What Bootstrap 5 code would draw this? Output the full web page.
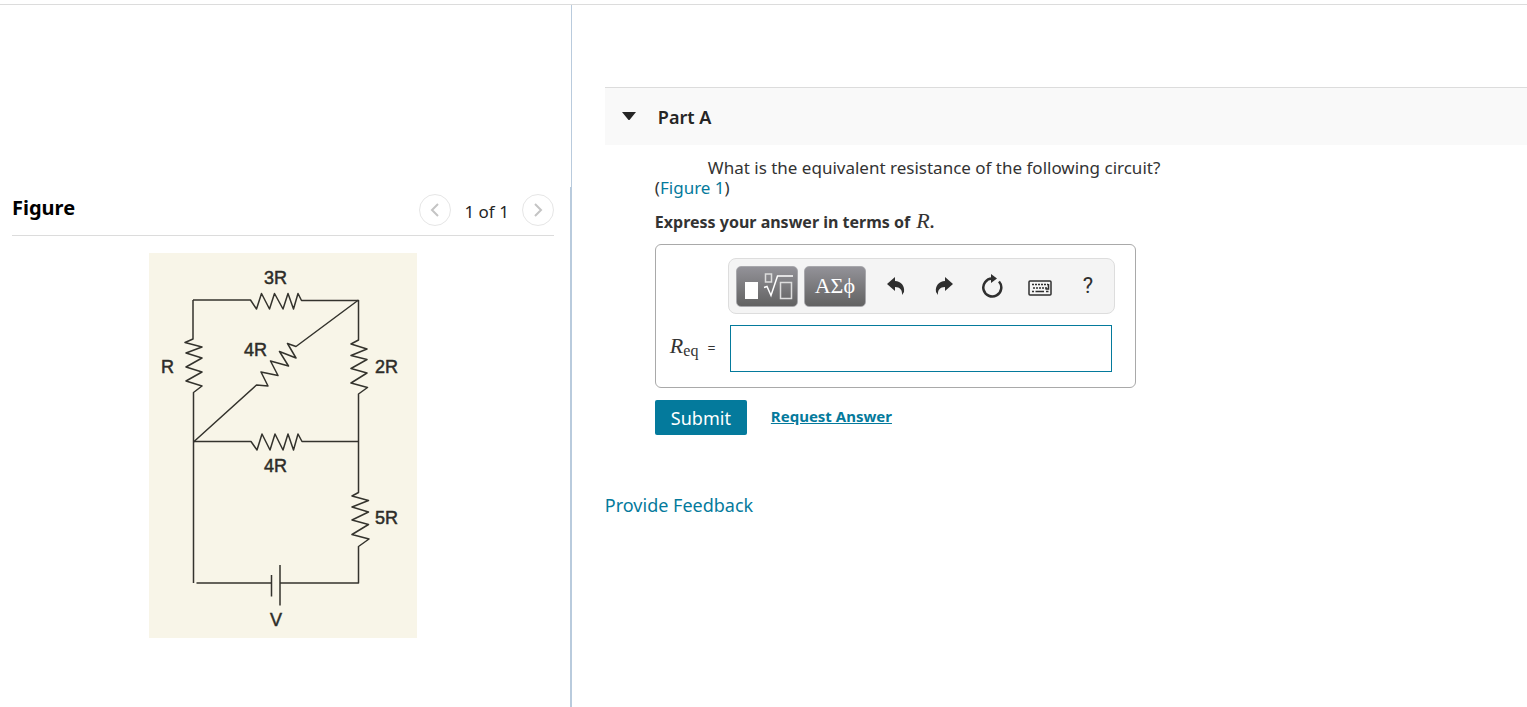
<!DOCTYPE html>
<html lang="en">
<head>
<meta charset="utf-8">
<meta name="viewport" content="width=device-width, initial-scale=1">
<title>Part A – Equivalent resistance</title>
<link rel="stylesheet" href="https://cdn.jsdelivr.net/npm/bootstrap@5.3.0/dist/css/bootstrap.min.css">
<style>
:root { --teal: #047a9c; --ink: #252525; --rule: #dcdcdc; --divider: #b9cbdd; }
body { font-family: "Noto Sans", "Open Sans", sans-serif; font-size: 17px; line-height: 20px; color: #333; background: #fff; }
a { color: var(--teal); }
.page { padding-top: 4px; }
.split { border-top: 1px solid var(--rule); }
.side { width: 37.45%; }
.side-top { height: 182px; border-right: 1px solid var(--divider); }
.figure-panel { border-right: 2px solid var(--divider); padding: 7px 16px 16px 12px; }
.figure-bar { border-bottom: 1px solid var(--rule); height: 42px; padding-bottom: 10px; }
.figure-title { font-size: 20px; line-height: 24px; font-weight: 700; color: #000; padding-bottom: 4px; }
.pager { width: 32px; height: 32px; padding: 0; border: 1px solid #e6e6e6; border-radius: 50%; background: #fff; }
.page-count { color: var(--ink); padding: 4px 13px 0; }
.circuit { width: 268px; height: 385px; background: #f8f5e8; margin-top: 17px; }
.main-col { padding: 82px 0 0 33px; }
.part-head { height: 58px; background: #f9f9f9; border-top: 1px solid var(--rule); padding: 0 17px; gap: 22px; }
.part-title { font-size: 18px; line-height: 24px; font-weight: 600; color: var(--ink); }
.part-body { padding: 13px 16px 0 50px; }
.lead-gap { text-indent: 53px; }
.var-r { font-family: "Liberation Serif", serif; font-style: italic; font-weight: 400; font-size: 22px; line-height: 20px; }
.prompt { font-size: 16px; font-weight: 700; margin-top: 13px; }
.prompt .var-r { margin-left: 2px; }
.answer { max-width: 481px; border: 1px solid #a9a9a9; border-radius: 6px; margin-top: 12px; padding: 13px 20px 15px 14px; }
.tools { background: #f4f4f4; border: 1px solid #ddd; border-radius: 8px; height: 56px; padding-left: 7px; margin-left: 58px; }
.tool-dark { height: 41px; width: 62px; padding: 0; border: 1px solid #a8a8ac; border-radius: 5px; color: #fff; background: linear-gradient(#939298, #626262); font: 22px/36px "Liberation Serif", serif; }
.tool-dark + .tool-dark { margin-left: 6px; }
.tool { width: 48px; height: 40px; padding: 0; border: 0; background: none; color: #2f2f2f; font: 22px/40px Roboto, sans-serif; }
.tool-first { margin-left: 6px; }
.answer-row { margin-top: 11px; padding-right: 3px; }
.answer-label { width: 60px; padding-bottom: 3px; }
.answer-label sub { font-family: "Liberation Serif", serif; font-size: 16px; bottom: -3px; }
.equals { font-size: 14px; margin-left: 9px; }
.answer-input { height: 47px; border: 1px solid var(--teal); border-radius: 0; padding: 4px 8px; min-width: 0; }
.submit { background: var(--teal); color: #fff; border: 0; border-radius: 2px; width: 92px; height: 35px; padding: 0; font-size: 18px; line-height: 34px; }
.request { font-size: 15px; font-weight: 700; padding-bottom: 4px; }
.feedback { font-size: 18px; line-height: 24px; margin-top: 58px; }
@media (min-width: 768px) { .split { min-height: calc(100vh - 4px); } }
</style>
<script src="https://cdn.jsdelivr.net/npm/bootstrap@5.3.0/dist/js/bootstrap.bundle.min.js"></script>
</head>
<body>
<div class="page">
<div class="split d-flex">
  <aside class="side d-flex flex-column flex-shrink-0">
    <div class="side-top"></div>
    <section class="figure-panel flex-grow-1">
      <div class="figure-bar d-flex align-items-center">
        <h2 class="figure-title m-0 me-auto">Figure</h2>
        <button class="pager d-flex align-items-center justify-content-center" type="button" aria-label="Previous figure">
          <svg width="14" height="16" viewBox="0 0 14 16" fill="none" stroke="#c4c4c4" stroke-width="2"><path d="M10 2 4 8l6 6"/></svg>
        </button>
        <span class="page-count text-nowrap">1 of 1</span>
        <button class="pager d-flex align-items-center justify-content-center" type="button" aria-label="Next figure">
          <svg width="14" height="16" viewBox="0 0 14 16" fill="none" stroke="#c4c4c4" stroke-width="2"><path d="m4 2 6 6-6 6"/></svg>
        </button>
      </div>
      <svg class="circuit d-block mx-auto" viewBox="0 0 268 385" role="img" aria-label="Resistor circuit">
        <g fill="none" stroke="#34332d" stroke-width="1.5" stroke-linejoin="round">
          <path d="M44 47H101.5L107.5 56 112.5 40.5 120.5 56 125.5 40.5 134 56 139 40.5 144.5 56 149 40.5 152.5 47.500H209.500"/>
          <path d="M44 47V86L36 89.500 53 94 37 100 53 105 37 114 53 119 37 128 53 133 44.500 139.500V330"/>
          <path d="M209.500 47V87L202 91 218 96 202 102.500 218 106.500 202 115.500 218 120 202 130 218.500 134.500 209.500 141V239.500L203 243 219.500 247.500 203 254 219.500 259 203 267 219.500 271.500 203 281.500 220 286 209.500 293.500V330H131"/>
          <path d="M44.500 188.500H102L108 197 113 181 121 197 126 181 134 197 139 181 144.500 197 149 181 153 188.500H209.500"/>
          <path d="M44.500 189 107.500 132 119 133 112 119 129 122.500 121.500 108 139.500 113 130.500 98.500 147 105 138.500 90.500 147 93.500 209.500 47"/>
          <path d="M47.500 330H122.500M122.500 322V343.500M131 312V352.500"/>
        </g>
        <g fill="#2e2d29" stroke="#2e2d29" stroke-width=".5" font-family="Liberation Sans, sans-serif" font-size="18">
          <text x="115" y="31">3R</text><text x="95" y="103">4R</text><text x="12" y="120">R</text><text x="226" y="120">2R</text>
          <text x="115" y="219">4R</text><text x="226" y="271">5R</text><text x="121" y="373">V</text>
        </g>
      </svg>
    </section>
  </aside>
  <main class="main-col flex-grow-1">
    <div class="part-head d-flex align-items-center">
      <svg width="14" height="10" viewBox="0 0 14 10" aria-hidden="true"><path d="M0 0H14L7.500 8h-1z" fill="#252525"/></svg>
      <h1 class="part-title m-0">Part A</h1>
    </div>
    <div class="part-body">
      <p class="lead-gap m-0">What is the equivalent resistance of the following circuit?</p>
      <p class="m-0">(<a class="text-decoration-none" href="#figure">Figure 1</a>)</p>
      <p class="prompt mb-0">Express your answer in terms of <span class="var-r">R</span>.</p>
      <form class="m-0">
        <div class="answer">
          <div class="tools d-flex align-items-center">
            <button class="tool-dark flex-shrink-0" type="button" aria-label="Math templates">
              <svg class="d-block" width="60" height="39" viewBox="0 0 60 39" fill="none"><path fill="#fff" d="M8 15h13v17H8z"/><path stroke="#ddd" stroke-width="1.500" d="M28.500 7h6v8h-6zM43.500 15.500h11v16h-11z"/><path stroke="#fff" stroke-width="1.500" d="M27 20.500l3-1 4 9 6.500-19.500H56"/></svg>
            </button>
            <button class="tool-dark flex-shrink-0" type="button" aria-label="Greek letters">ΑΣϕ</button>
            <button class="tool tool-first flex-shrink-0 d-flex align-items-center justify-content-center" type="button" aria-label="Undo">
              <svg width="18" height="20" viewBox="0 0 18 20"><path fill="#2f2f2f" d="M0 8 8 1V5C14 5 18 10 17 16L15 19C15.500 14 13 11 8 11V15z"/></svg>
            </button>
            <button class="tool flex-shrink-0 d-flex align-items-center justify-content-center" type="button" aria-label="Redo">
              <svg width="18" height="20" viewBox="0 0 18 20"><path fill="#2f2f2f" d="M18 8 10 1V5C4 5 0 10 1 16L3 19C2.500 14 5 11 10 11V15z"/></svg>
            </button>
            <button class="tool flex-shrink-0 d-flex align-items-center justify-content-center" type="button" aria-label="Reset">
              <svg width="22" height="24" viewBox="0 0 22 24"><path fill="none" stroke="#2f2f2f" stroke-width="2.500" d="M18 7.500A9 9 0 1 1 11 4.500"/><path fill="#2f2f2f" d="M10 0 16 4.500 10 9z"/></svg>
            </button>
            <button class="tool flex-shrink-0 d-flex align-items-center justify-content-center" type="button" aria-label="Keyboard shortcuts">
              <svg class="mt-1" width="24" height="16" viewBox="0 0 24 16" fill="none" stroke="#2f2f2f"><rect x="1" y="1" width="22" height="14" rx="1" stroke-width="1.500"/><path stroke-width="1.500" stroke-dasharray="2 1" d="M4 4.500H20"/><path stroke-width="1.500" stroke-dasharray="2 1" d="M5 8H19"/><path stroke-width="1.500" d="M20.500 4v5h-3M4 11.500h2M7.500 11.500h8.500M18 11.500h2.500"/></svg>
            </button>
            <button class="tool flex-shrink-0" type="button" aria-label="Help">?</button>
          </div>
          <div class="answer-row d-flex align-items-center">
            <label class="answer-label flex-shrink-0 text-nowrap" for="req"><span class="var-r">R</span><sub>eq</sub><span class="equals">=</span></label>
            <input class="answer-input flex-grow-1" id="req" type="text">
          </div>
        </div>
        <div class="d-flex align-items-center mt-2 pt-1">
          <button class="submit" type="button">Submit</button>
          <a class="request ms-4" href="#answer">Request Answer</a>
        </div>
      </form>
    </div>
    <div class="feedback"><a class="text-decoration-none" href="#feedback">Provide Feedback</a></div>
  </main>
</div>
</div>
</body>
</html>
